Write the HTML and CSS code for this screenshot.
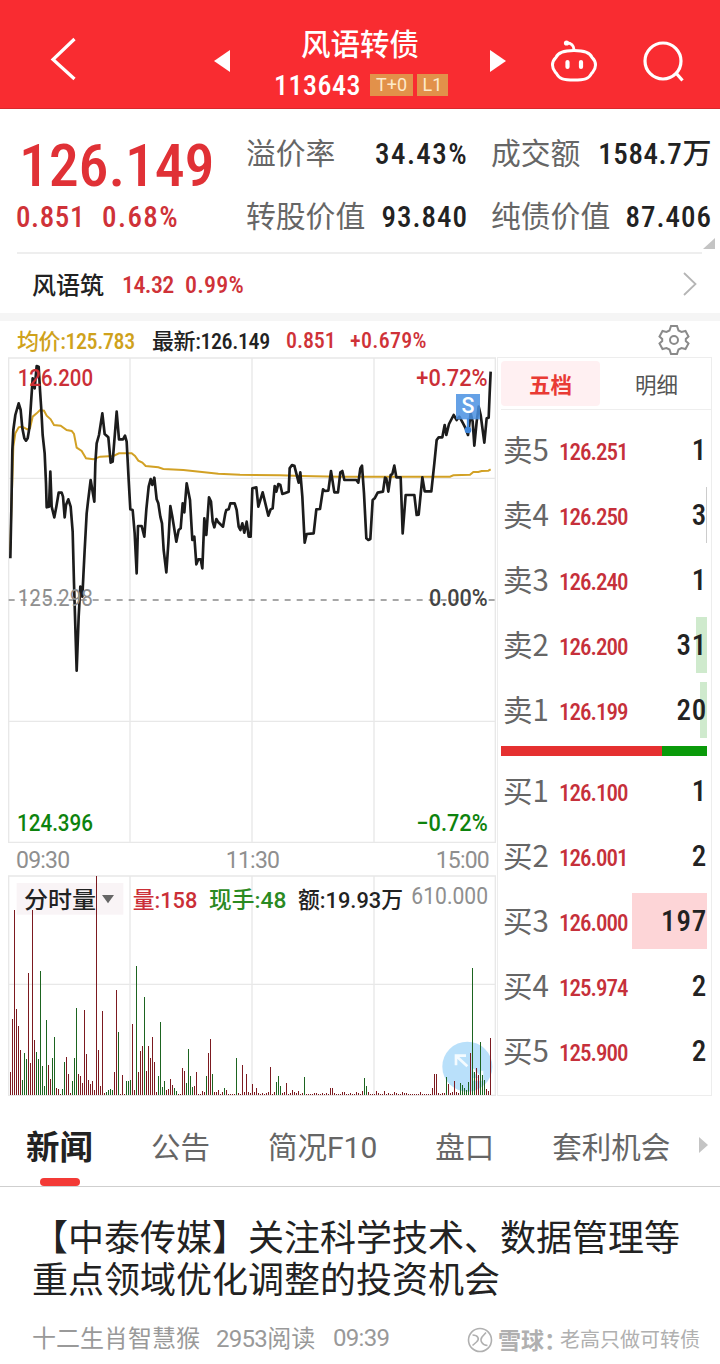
FILE: index.html
```
<!DOCTYPE html>
<html lang="zh-CN">
<head>
  <meta charset="UTF-8">
  <title>风语转债 113643</title>
  <link rel="stylesheet" href="styles.css">
</head>
<body>

  <header class="topbar">
    <svg class="back" width="26" height="44" viewBox="0 0 26 44"><path d="M24.500 2 L3 22.500 L24.500 42"/></svg>
    <svg class="arrow" width="18" height="24" viewBox="0 0 18 24"><path d="M17 1 V23 L1 12 Z"/></svg>
    <div class="stock">
      <h1>风语转债</h1>
      <div class="code"><span class="num">113643</span><i class="t0">T+0</i><i class="l1">L1</i></div>
    </div>
    <svg class="arrow next" width="18" height="24" viewBox="0 0 18 24"><path d="M1 1 V23 L17 12 Z"/></svg>
    <svg class="robot" width="48" height="44" viewBox="0 0 48 44">
      <path d="M24 10.500 C15 10.500 8 12 6 17.500 C4.500 19 2.500 20.500 2.500 25 C2.500 30 4.500 31 6.500 33.500 C9 39 14 40 24 40 C34 40 39 39 41.500 33.500 C43.500 31 45.500 30 45.500 25 C45.500 20.500 43.500 19 42 17.500 C40 12 33 10.500 24 10.500 Z"/>
      <path d="M24 10 C24 5.500 21 3 17 3"/>
      <circle class="dot" cx="16.500" cy="3" r="2.600"/>
      <path class="eyes" d="M17.500 22 V27 M31 22 V27"/>
    </svg>
    <svg class="search" width="44" height="42" viewBox="0 0 44 42"><circle cx="21" cy="20" r="18"/><path d="M34 32 L40.500 39.500"/></svg>
  </header>

  <section class="quote">
    <div class="price">
      <div class="last num">126.149</div>
      <div class="change num"><span>0.851</span><span>0.68%</span></div>
    </div>
    <div class="facts">
      <label>溢价率</label><b class="num">34.43%</b>
      <label>成交额</label><b class="num">1584.7万</b>
      <label>转股价值</label><b class="num">93.840</b>
      <label>纯债价值</label><b class="num">87.406</b>
    </div>
    <i class="corner"></i>
  </section>

  <section class="underlying">
    <span class="name">风语筑</span>
    <span class="num">14.32</span>
    <span class="num">0.99%</span>
    <svg width="14" height="24" viewBox="0 0 14 24"><path d="M1 1 L12.500 12 L1 23"/></svg>
  </section>

  <section class="legend">
    <span class="avg num">均价:125.783</span>
    <span class="new num">最新:126.149</span>
    <span class="chg num">0.851</span>
    <span class="pct num">+0.679%</span>
    <svg width="32" height="32" viewBox="0 0 32 32">
      <path d="M13 2 H19 L20.500 6.500 L23.500 8 L27.500 7 L30.500 12.500 L27.800 15 V17 L30.500 19.500 L27.500 25 L23.500 24 L20.500 25.500 L19 30 H13 L11.500 25.500 L8.500 24 L4.500 25 L1.500 19.500 L4.200 17 V15 L1.500 12.500 L4.500 7 L8.500 8 L11.500 6.500 Z"/>
      <circle cx="16" cy="16" r="4"/>
    </svg>
  </section>

  <main class="market">
    <div class="charts">
      <!-- chart units are thirds of a pixel -->
      <svg class="chart" width="497" height="486" viewBox="0 21 1491 1458">
        <path class="grid" d="M26 24 H1486 V1477 H26 Z M390 24 V1477 M756 24 V1477 M1122 24 V1477 M26 385 H1486 M26 1114 H1486"/>
        <path class="zero" d="M26 750 H1486"/>
        <polyline class="avg-line" points="31,600 34,480 37,390 40,290 46,250 56,232 66,230 82,238 90,235 98,200 110,190 120,180 132,182 140,197 152,208 162,225 182,227 200,240 215,243 222,252 230,293 245,303 258,325 280,328 300,320 340,318 357,310 395,310 405,318 415,332 427,338 437,348 475,352 490,357 550,360 655,371 720,374 840,376 905,378 1020,380 1350,380 1360,376 1410,374 1420,366 1435,366 1445,363 1465,362 1472,358"/>
        <polyline class="price-line" points="31,625 34,480 37,300 40,240 46,195 56,160 62,180 67,235 73,265 78,272 83,265 88,235 93,160 98,85 104,115 110,48 116,50 120,120 124,180 128,255 134,310 138,400 140,472 147,470 151,365 155,470 163,502 169,470 176,428 185,428 189,440 194,502 198,465 205,448 212,470 218,545 222,700 230,962 236,800 241,710 247,740 250,680 254,600 260,490 264,455 272,390 283,455 286,340 290,280 297,255 307,190 314,252 325,262 332,338 338,335 344,260 350,185 357,268 369,268 375,257 380,275 386,390 391,478 398,480 404,550 410,670 414,528 425,528 433,560 439,478 446,410 452,387 457,405 463,383 470,448 475,460 481,500 486,520 491,600 499,667 505,580 511,468 517,500 529,575 536,540 542,535 548,460 553,487 560,400 570,450 577,570 583,560 589,643 595,628 602,628 607,655 613,505 619,555 627,442 633,455 638,515 643,532 649,507 655,517 669,530 676,490 679,480 686,478 691,460 704,460 710,480 716,530 721,540 727,520 733,548 740,515 746,560 752,560 757,415 769,412 775,470 788,427 805,497 812,478 818,475 824,408 829,425 835,402 841,405 847,432 854,430 866,425 869,355 876,345 883,347 896,398 901,367 907,440 914,578 920,552 941,550 949,478 960,477 969,418 975,423 985,422 993,363 1003,427 1014,427 1021,367 1027,363 1033,390 1069,390 1075,398 1081,355 1086,347 1092,430 1099,565 1105,570 1111,567 1118,450 1124,445 1133,428 1149,425 1155,383 1159,385 1165,425 1172,375 1177,372 1183,347 1189,382 1202,382 1208,550 1217,435 1243,435 1250,495 1256,494 1267,382 1274,424 1294,424 1303,340 1310,270 1316,262 1327,262 1334,225 1339,255 1347,222 1361,195 1370,210 1378,200 1388,218 1397,235 1404,255 1412,190 1418,215 1423,287 1430,215 1436,170 1442,195 1453,278 1460,205 1466,203 1469,130 1472,65"/>
        <g class="sell-mark">
          <rect x="1368" y="132" width="72" height="76"/>
          <path d="M1404 205 V236"/>
          <circle cx="1404" cy="240" r="10"/>
          <text x="1404" y="188" text-anchor="middle">S</text>
        </g>
        <text class="up" x="53" y="108" textLength="226" lengthAdjust="spacingAndGlyphs">126.200</text>
        <text class="up" x="1249" y="108" textLength="214" lengthAdjust="spacingAndGlyphs">+0.72%</text>
        <text class="flat" x="53" y="768" textLength="226" lengthAdjust="spacingAndGlyphs">125.298</text>
        <text class="mid" x="1287" y="768" textLength="176" lengthAdjust="spacingAndGlyphs">0.00%</text>
        <text class="down" x="51" y="1444" textLength="228" lengthAdjust="spacingAndGlyphs">124.396</text>
        <text class="down" x="1249" y="1444" textLength="214" lengthAdjust="spacingAndGlyphs">−0.72%</text>
      </svg>

      <div class="times"><span>09:30</span><span>11:30</span><span>15:00</span></div>

      <svg class="chart" width="497" height="221" viewBox="0 225 1491 663">
        <path class="grid" d="M26 228 H1486 V886 H26 Z M390 228 V886 M756 228 V886 M1122 228 V886 M26 553 H1486"/>
        <rect class="picker" x="50" y="249" width="320" height="95"/>
        <g class="expand">
          <circle cx="1402" cy="800" r="75"/>
          <path d="M1368 796 V767 H1398 M1368 767 L1402 799 M1446 812 V838 H1418 M1446 838 L1418 808"/>
        </g>
        <path id="volUp" class="vol-up"/>
        <path id="volDown" class="vol-down"/>
        <text class="cn dark" x="72" y="325" textLength="216" lengthAdjust="spacingAndGlyphs">分时量</text>
        <path class="caret" d="M306 285 H342 L324 310 Z"/>
        <text class="cn up" x="398" y="324" textLength="194" lengthAdjust="spacingAndGlyphs">量:158</text>
        <text class="cn hand" x="627" y="324" textLength="232" lengthAdjust="spacingAndGlyphs">现手:48</text>
        <text class="cn dark" x="894" y="324" textLength="315" lengthAdjust="spacingAndGlyphs">额:19.93万</text>
        <text class="flat" x="1234" y="312" textLength="230" lengthAdjust="spacingAndGlyphs">610.000</text>
      </svg>
    </div>

    <div class="book">
      <div class="book-tabs"><span class="on">五档</span><span>明细</span></div>
      <div class="level"><label>卖5</label><span class="num">126.251</span><b class="num">1</b></div>
      <div class="level"><label>卖4</label><span class="num">126.250</span><b class="num">3</b><i class="bar thin"></i></div>
      <div class="level"><label>卖3</label><span class="num">126.240</span><b class="num">1</b></div>
      <div class="level"><label>卖2</label><span class="num">126.200</span><b class="num">31</b><i class="bar ask" style="width: 11px"></i></div>
      <div class="level"><label>卖1</label><span class="num">126.199</span><b class="num">20</b><i class="bar ask" style="width: 7px"></i></div>
      <div class="ratio"><i style="width: 78.300%"></i></div>
      <div class="level"><label>买1</label><span class="num">126.100</span><b class="num">1</b></div>
      <div class="level"><label>买2</label><span class="num">126.001</span><b class="num">2</b></div>
      <div class="level"><label>买3</label><span class="num">126.000</span><b class="num">197</b><i class="bar bid" style="width: 75px"></i></div>
      <div class="level"><label>买4</label><span class="num">125.974</span><b class="num">2</b></div>
      <div class="level"><label>买5</label><span class="num">125.900</span><b class="num">2</b></div>
    </div>
  </main>

  <nav class="tabs">
    <span class="on">新闻</span>
    <span>公告</span>
    <span>简况<em>F10</em></span>
    <span>盘口</span>
    <span>套利机会</span>
    <i class="more"></i>
  </nav>

  <article class="news">
    <h2>【中泰传媒】关注科学技术、数据管理等<br>重点领域优化调整的投资机会</h2>
    <div class="meta">
      <span class="author">十二生肖智慧猴</span>
      <span class="reads"><em>2953</em>阅读</span>
      <em>09:39</em>
      <div class="mark">
        <svg width="26" height="26" viewBox="0 0 26 26"><circle cx="13" cy="13" r="11.500"/><path d="M5.500 8 C11 8 13 12 9.500 15 L5.500 18.500 M19 5.500 L15 10 C12.500 13.500 15 18 20.500 18.500"/></svg>
        <strong>雪球：</strong><span>老高只做可转债</span>
      </div>
    </div>
  </article>

  <script>
    // one value per minute, 09:30 - 15:00; "g" = falling minute
    const volume = ('70 228 555 257 206 135 45g 127g 108g 365 95 555 166 130g 108g 373g 88g 28g 225g 90 ' +
      '48 110g 175g 22 18 2 18g 98g 113 63 6 42g 112g 260g 63 58 35 255 123 45 ' +
      '32 42 15 657 135 28 252 5 8g 15g 18g 14g 68 315 190g 2 60 4 42g 42g ' +
      '45g 214 14 388g 70 132 147 295g 72 147 112 175 98 8 58g 218g 25g 42g 14 17 ' +
      '48 29 22g 12g 3 3 82 73 35g 138g 58g 25g 27 70 4 3 12 10 57g 125 ' +
      '167 62g 8 8 15 3 8 20g 14 3 2 2 2 112g 6 3 90 10 62 8 ' +
      '6 33 8 20 6 4 6 4 5 8 84 4 10 40g 56g 27g 6 8 36 3 ' +
      '6 15 8 5 11 4 5 54g 2 2 2 2 5 5 2 2 5 4 6 2 ' +
      '20 20 5 2 2 4 8 10 2 3 5 2 2 8 6 4 12 50g 28g 8 ' +
      '2 4 2 12 5 2 2 12 2 6 4 4 8 5 2 2 8 5 5 2 ' +
      '2 2 2 4 2 8 4 4 2 2 2 20 62 62 6 3 5 6 53g 33 ' +
      '6 8 42 8 6 36g 30g 20g 15g 40g 125 380g 70g 80 60 160g 60g 45g 18 12 172').split(' ');

    let up = '';
    let down = '';
    volume.forEach((v, i) => {
      const bar = `M${31.5 + i * 6} 885 v${-parseInt(v)} `;
      if (v.endsWith('g')) down += bar; else up += bar;
    });
    document.getElementById('volUp').setAttribute('d', up);
    document.getElementById('volDown').setAttribute('d', down);
  </script>

</body>
</html>
```
FILE: styles.css
```
* {
  box-sizing: border-box;
}

body {
  margin: 0;
  width: 720px;
  height: 1364px;
  overflow: hidden;
  background: #fff;
  color: #222;
  font-family: "Noto Sans CJK SC", sans-serif;
}

i, em {
  font-style: normal;
}

svg {
  display: block;
  fill: none;
}

.num {
  font-family: Roboto, "Noto Sans CJK SC", sans-serif;
  font-stretch: 85%;
}

/* header */
.topbar {
  display: flex;
  height: 109px;
  padding: 0 30px 0 50px;
  background: #f92c31;
  border-bottom: 1px solid #d9282d;
  color: #fff;
}

.topbar svg {
  stroke: #fff;
  stroke-width: 3.2;
  flex: none;
}

.topbar .back {
  margin-top: 37px;
}

.topbar .arrow {
  margin: 49px 0 0 137px;
  fill: #fff;
  stroke: none;
}

.topbar .next {
  margin-left: 0;
}

.stock {
  flex: none;
  width: 258px;
  padding-top: 23px;
  text-align: center;
}

.stock h1 {
  margin: 0;
  font-size: 29.5px;
  font-weight: 500;
  line-height: 38px;
}

.code {
  display: flex;
  align-items: center;
  height: 44px;
  margin-top: 2px;
  padding-left: 43px;
}

.code .num {
  width: 96px;
  text-align: left;
  font-size: 28px;
  font-weight: 500;
  letter-spacing: 0.5px;
}

.code i {
  height: 22px;
  background: #e2914a;
  color: #fdeacb;
  font: 400 18px/22px Roboto, sans-serif;
}

.t0 {
  width: 43px;
  margin-right: 4px;
}

.l1 {
  width: 31px;
}

.topbar .robot {
  margin: 40px 0 0 43px;
  stroke-width: 3;
}

.robot .dot {
  fill: #fff;
  stroke: none;
}

.robot .eyes {
  stroke-width: 4.2;
  stroke-linecap: round;
}

.topbar .search {
  margin: 41px 0 0 44px;
}

/* quote */
.quote {
  position: relative;
  display: flex;
  height: 145px;
  padding: 0 9px 0 16px;
}

.quote::after {
  content: "";
  position: absolute;
  left: 17px;
  right: 18px;
  bottom: 0;
  height: 2px;
  background: #eee;
}

.price {
  width: 230px;
  color: #e03136;
}

.last {
  height: 87px;
  padding: 21px 0 0 3px;
  font-size: 60px;
  font-weight: 500;
  line-height: 72px;
  letter-spacing: -0.2px;
}

.change {
  display: flex;
  gap: 17px;
  font-size: 29px;
  line-height: 42px;
  font-weight: 500;
  letter-spacing: 0.6px;
  color: #cf3238;
}

.change span + span {
  letter-spacing: 1.4px;
}

.facts {
  display: grid;
  grid-template-columns: 121px 100px 145px 99px;
  grid-template-rows: 63px 63px;
  padding-top: 13px;
  align-items: center;
}

.facts label {
  font-size: 29.8px;
  color: #666;
  white-space: nowrap;
  margin-top: -5px;
}

.facts label:nth-of-type(even) {
  padding-left: 24px;
}

.facts b {
  justify-self: end;
  margin-right: -1px;
  font-size: 29px;
  font-weight: 500;
  letter-spacing: 1px;
  white-space: nowrap;
}

.facts b:nth-of-type(1) {
  letter-spacing: 1.4px;
}

.facts b:nth-of-type(2) {
  letter-spacing: 0.6px;
  margin-top: -5px;
}

.corner {
  position: absolute;
  right: 5px;
  bottom: 5px;
  border-left: 12px solid transparent;
  border-bottom: 11px solid #c4c4c4;
}

/* underlying stock */
.underlying {
  display: flex;
  align-items: center;
  height: 67px;
  padding: 0 23px 0 32px;
  border-bottom: 8px solid #f5f5f5;
  font-size: 24px;
}

.underlying .name {
  width: 90px;
  font-weight: 500;
}

.underlying .num {
  width: 63px;
  padding-top: 2px;
  color: #cf3238;
  font-weight: 500;
  letter-spacing: -0.6px;
}

.underlying .num + .num {
  letter-spacing: 0.2px;
}

.underlying svg {
  margin-left: auto;
  stroke: #b5b5b5;
  stroke-width: 1.8;
}

/* chart legend */
.legend {
  display: grid;
  grid-template-columns: 135px 134px 64px 306px 32px;
  align-items: center;
  height: 36px;
  padding: 2px 0 0 17px;
  font-size: 22px;
  font-weight: 500;
  letter-spacing: -0.4px;
  white-space: nowrap;
}

.legend .avg, .legend .new {
  margin-top: -3px;
}

.legend .avg {
  color: #cfa21c;
}

.legend .chg, .legend .pct {
  color: #cf3238;
  letter-spacing: -0.1px;
}

.legend .pct {
  letter-spacing: 0.3px;
}

.legend svg {
  margin-left: 2px;
  stroke: #8a8a8a;
  stroke-width: 2;
}

/* charts */
.market {
  display: flex;
  height: 739px;
}

.charts {
  width: 497px;
}

.chart text {
  font: 500 71px Roboto, "Noto Sans CJK SC", sans-serif;
}

.chart text.cn {
  font-size: 68px;
}

.grid {
  stroke: #e8e8e8;
  stroke-width: 4;
}

.zero {
  stroke: #8a8a8a;
  stroke-width: 4;
  stroke-dasharray: 18 18;
}

.avg-line {
  stroke: #d2a125;
  stroke-width: 6;
}

.price-line {
  stroke: #1c1c1c;
  stroke-width: 8;
  stroke-linejoin: round;
}

.up {
  fill: #cb2f37;
}

.down {
  fill: #0d830d;
}

.flat {
  fill: #8f8f8f;
}

.chart text.flat {
  font-weight: 400;
}

.mid {
  fill: #444;
}

.dark {
  fill: #222;
}

.hand {
  fill: #2a8a22;
}

.sell-mark rect {
  fill: #4a90e2;
  opacity: 0.85;
}

.sell-mark path {
  stroke: #4a90e2;
  stroke-width: 7;
}

.sell-mark circle {
  fill: #3f86da;
}

.chart .sell-mark text {
  fill: #fff;
  font-size: 64px;
}

.times {
  display: flex;
  justify-content: space-between;
  height: 32px;
  padding: 0 8px 0 16px;
  color: #8f8f8f;
  font: 23px/35px Roboto, sans-serif;
  letter-spacing: -0.8px;
}

.picker {
  fill: #f9f4f6;
}

.caret {
  fill: #666;
}

.vol-up, .vol-down {
  stroke: #7c1a20;
  stroke-width: 3;
  shape-rendering: crispEdges;
}

.vol-down {
  stroke: #1d6420;
}

.expand circle {
  fill: #b9e0fa;
}

.expand path {
  stroke: #f4fbff;
  stroke-width: 8;
}

/* order book */
.book {
  width: 215px;
  padding: 0 4px 0 3px;
  border: 1px solid #ededed;
}

.book-tabs {
  display: flex;
  height: 52px;
  margin: 0 -4px 8px 0;
  padding-top: 3px;
  border-bottom: 1px solid #eee;
  font-size: 21.5px;
  line-height: 45px;
  text-align: center;
  color: #555;
}

.book-tabs span {
  flex: none;
  width: 99px;
  height: 45px;
}

.book-tabs span + span {
  width: 113px;
}

.book-tabs .on {
  background: #fff0f2;
  color: #e93a34;
  font-weight: 700;
  border-radius: 4px;
}

.level {
  position: relative;
  display: flex;
  align-items: center;
  height: 65px;
  padding: 0 1px 0 2px;
}

.level label {
  width: 56px;
  margin-top: -5px;
  font-size: 29.5px;
  color: #666;
}

.level span {
  font-size: 23px;
  font-weight: 500;
  letter-spacing: -1px;
  color: #c6303a;
  padding-top: 4px;
}

.level b {
  margin-left: auto;
  margin-right: -1px;
  font-size: 29px;
  font-weight: 500;
  letter-spacing: 0.8px;
  padding-bottom: 1px;
}

.level span, .level b {
  position: relative;
  z-index: 1;
}

.bar {
  position: absolute;
  right: 0;
  top: 4px;
  height: 56px;
}

.ask {
  background: #cfeacd;
}

.bid {
  background: #fdd5d7;
}

.thin {
  width: 1px;
  background: #ccc;
}

.ratio {
  height: 10px;
  margin: 3px 0;
  background: #0a9a0a;
}

.ratio i {
  display: block;
  height: 100%;
  background: #e53030;
}

/* news tabs */
.tabs {
  display: flex;
  align-items: center;
  height: 91px;
  padding: 7px 12px 0 26px;
  border-bottom: 1px solid #cfcfcf;
  font-size: 29.5px;
  color: #666;
}

.tabs span {
  margin-right: 58px;
  white-space: nowrap;
}

.tabs em {
  font: 30px Roboto, sans-serif;
}

.tabs .on {
  position: relative;
  font-size: 33.5px;
  font-weight: 700;
  color: #222;
}

.tabs .on::after {
  content: "";
  position: absolute;
  left: 14px;
  bottom: -17px;
  width: 40px;
  height: 8px;
  border-radius: 4px;
  background: #f33a36;
}

.tabs span:nth-child(5) {
  margin-right: 0;
}

.more {
  margin-left: auto;
  border: 8px solid transparent;
  border-left: 9px solid #c4c4c4;
  border-right: 0;
}

/* news item */
.news {
  padding: 27px 20px 0 32px;
}

.news h2 {
  margin: 0;
  font-size: 36px;
  font-weight: 400;
  line-height: 42px;
  white-space: nowrap;
}

.meta {
  display: flex;
  align-items: center;
  margin-top: 18px;
  height: 40px;
  font-size: 24px;
  color: #999;
  white-space: nowrap;
}

.author {
  width: 184px;
}

.reads {
  width: 117px;
}

.meta em {
  font-family: Roboto, sans-serif;
  letter-spacing: -0.7px;
}

.meta > em {
  padding-top: 3px;
}

.mark {
  display: flex;
  align-items: center;
  margin-left: auto;
  padding-top: 5px;
  font-size: 20px;
  color: #b0b0b0;
}

.mark svg {
  margin: 2px 5px 0 0;
  stroke: #b0b0b0;
  stroke-width: 1.6;
}

.mark strong {
  width: 62px;
  font-size: 23px;
}
```
